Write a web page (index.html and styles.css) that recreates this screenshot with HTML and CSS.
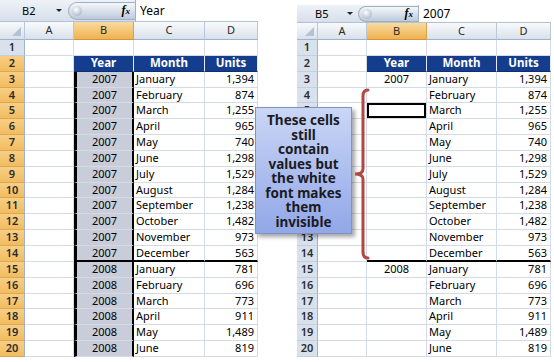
FILE: index.html
```html
<!DOCTYPE html>
<html lang="en">
<head>
    <meta charset="UTF-8">
    <title>Hidden values with white font</title>
    <link rel="stylesheet" href="styles.css">
</head>
<body>
    <div class="page">
        <div class="sheet sheet-left">
            <div class="formula-bar">
                <div class="name-box"><span>B2</span><span class="drop"></span></div>
                <div class="fx-pill"><span class="knob"></span><span class="fx">f<small>x</small></span></div>
                <div class="formula-input">Year</div>
            </div>
            <div class="grid" id="gridLeft"></div>
        </div>

        <div class="sheet sheet-right">
            <div class="formula-bar">
                <div class="name-box"><span>B5</span><span class="drop"></span></div>
                <div class="fx-pill"><span class="knob"></span><span class="fx">f<small>x</small></span></div>
                <div class="formula-input">2007</div>
            </div>
            <div class="grid" id="gridRight"></div>
        </div>

        <!-- callout and brace sit over the sheets -->
        <div class="callout">These cells<br>still<br>contain<br>values but<br>the white<br>font makes<br>them<br>invisible</div>
        <svg class="brace" width="22" height="176" viewBox="0 0 22 176">
            <path d="M18,4 Q13,4 13,10 L13,83 Q13,88 5,88 Q13,88 13,93 L13,166 Q13,172 18,172" fill="none" stroke="#b2483f" stroke-width="3" stroke-linecap="round"/>
        </svg>
    </div>

    <script>
        const months = ["January", "February", "March", "April", "May", "June", "July", "August",
            "September", "October", "November", "December", "January", "February", "March", "April", "May", "June"];
        const units = ["1,394", "874", "1,255", "965", "740", "1,298", "1,529", "1,284", "1,238",
            "1,482", "973", "563", "781", "696", "773", "911", "1,489", "819"];

        function cell(cls, text) {
            const d = document.createElement("div");
            d.className = "cell " + cls;
            d.textContent = text || "";
            return d;
        }

        function buildSheet(id, side) {
            const grid = document.getElementById(id);
            const corner = cell("corner");
            corner.innerHTML = '<svg width="9" height="9" viewBox="0 0 9 9"><path d="M9,0 L9,9 L0,9 Z" fill="#b3c2d6"/></svg>';
            grid.appendChild(corner);
            ["A", "B", "C", "D"].forEach(c => {
                grid.appendChild(cell("col-head" + (c === "B" ? " col-active" : ""), c));
            });

            for (let r = 1; r <= 20; r++) {
                const head = cell("row-head", String(r));
                if (side === "left" && r >= 2) head.classList.add("row-active");
                grid.appendChild(head);
                grid.appendChild(cell("c"));

                let b, c, d;
                if (r === 1) {
                    b = cell("c"); c = cell("c"); d = cell("c");
                } else if (r === 2) {
                    b = cell("head", "Year"); c = cell("head", "Month"); d = cell("head", "Units");
                } else {
                    const i = r - 3;
                    b = cell("year", i < 12 ? "2007" : "2008");
                    c = cell("month", months[i]);
                    d = cell("num", units[i]);
                    if (side === "left") b.classList.add("picked");
                    if (side === "right" && r !== 3 && r !== 15) b.classList.add("white-font");
                    if (side === "right" && r === 5) b.classList.add("active");
                    if (r === 14) [b, c, d].forEach(x => x.classList.add("split"));
                }
                grid.appendChild(b);
                grid.appendChild(c);
                grid.appendChild(d);
            }
        }

        buildSheet("gridLeft", "left");
        buildSheet("gridRight", "right");
    </script>
</body>
</html>
```

FILE: styles.css
```css
body {
    margin: 0;
    background-color: #fff;
    font-family: "Noto Sans", "Liberation Sans", sans-serif;
    font-size: 11px;
    color: #000;
}
.page {
    position: relative;
    display: flex;
    gap: 39px;
    width: 554px;
    height: 362px;
    overflow: hidden;
}
.sheet {
    display: flex;
    flex-direction: column;
}
.sheet-left {
    width: 258px;
}
.sheet-right {
    width: 254px;
    padding-top: 5px;
}

/* formula bar */
.formula-bar {
    display: flex;
    align-items: center;
    height: 22px;
    box-sizing: border-box;
    background: linear-gradient(#eef2f8, #d6dfeb);
    border-bottom: 1px solid #b3c1d2;
}
.sheet-right .formula-bar {
    height: 18px;
}
.name-box {
    width: 64px;
    display: flex;
    justify-content: space-between;
    align-items: center;
    padding: 0 2px 0 22px;
    box-sizing: border-box;
}
.sheet-right .name-box {
    width: 58px;
    padding-left: 18px;
}
.drop {
    width: 0;
    height: 0;
    border-left: 3px solid transparent;
    border-right: 3px solid transparent;
    border-top: 3px solid #222;
}
.fx-pill {
    margin-left: 4px;
    width: 67px;
    height: 18px;
    box-sizing: border-box;
    border: 1px solid #9fb0c4;
    border-right: none;
    border-radius: 9px 0 0 9px;
    background: linear-gradient(#f5f7fb, #bccadb);
    display: flex;
    align-items: center;
    justify-content: space-between;
    padding: 0 5px 0 3px;
}
.sheet-right .fx-pill {
    margin-left: 3px;
    width: 60px;
    height: 16px;
}
.knob {
    width: 10px;
    height: 10px;
    border-radius: 50%;
    background: radial-gradient(circle at 40% 35%, #fff, #97a5b7);
}
.fx {
    font-family: "Liberation Serif", serif;
    font-style: italic;
    font-weight: bold;
    font-size: 12px;
}
.fx small {
    font-size: 9px;
}
.formula-input {
    flex: 1;
    align-self: stretch;
    display: flex;
    align-items: center;
    padding-left: 4px;
    background-color: #fff;
    border-left: 1px solid #9fb0c4;
    font-size: 12px;
}

/* grid */
.grid {
    display: grid;
    grid-template-columns: 25px 49px 60px 71px 53px;
    grid-template-rows: 18px repeat(20, 15.85px);
}
.sheet-right .grid {
    grid-template-columns: 21px 49px 60px 70px 54px;
    grid-template-rows: 17px repeat(20, 15.85px);
}
.cell {
    box-sizing: border-box;
    border-right: 1px solid #d4dbe6;
    border-bottom: 1px solid #d4dbe6;
    line-height: 14.85px;
    white-space: nowrap;
    overflow: hidden;
}
.corner, .col-head {
    display: flex;
    align-items: center;
    justify-content: center;
    background: linear-gradient(#f8fafc, #dae1eb);
    border-right-color: #b9c7d8;
    border-bottom-color: #9eb2c9;
    color: #2a2a2a;
}
.corner {
    justify-content: flex-end;
    align-items: flex-end;
    padding: 0 3px 3px 0;
}
.col-active {
    background: linear-gradient(#f9dba1, #efb24e);
    border-right-color: #dea14a;
    border-bottom-color: #d39342;
}
.row-head {
    text-align: center;
    font-weight: 600;
    background-color: #d9e1ec;
    border-right-color: #9eb2c9;
    border-bottom-color: #c3cfdd;
    color: #2b2b2b;
}
.row-active {
    background: linear-gradient(#f7cf86, #f2bc5f);
    border-bottom-color: #dba752;
}
.head {
    text-align: center;
    font-weight: bold;
    font-size: 11.5px;
    color: #fff;
    background-color: #143e8d;
    border-right-color: #e4eaf3;
    border-bottom-color: #0d2f6e;
}
.year {
    text-align: center;
}
.month {
    padding-left: 2px;
}
.num {
    text-align: right;
    padding-right: 3px;
}
.picked {
    background-color: #c9ccd9;
    border-left: 3px solid #000;
    border-right: 2px solid #000;
}
.split {
    border-bottom: 2px solid #000;
}
.white-font {
    color: #fff;
}
.active {
    box-shadow: inset 0 0 0 2px #000;
}

/* overlay */
.callout {
    position: absolute;
    left: 255px;
    top: 107px;
    width: 97px;
    height: 127px;
    box-sizing: border-box;
    padding-top: 5px;
    background: linear-gradient(#cad6f6, #91a7e7);
    border: 1px solid #7f92c4;
    box-shadow: 3px 3px 4px rgba(0, 0, 0, 0.35);
    text-align: center;
    font-weight: bold;
    font-size: 13.5px;
    line-height: 14.5px;
    color: #1b1b22;
}
.brace {
    position: absolute;
    left: 350px;
    top: 86px;
}
```
